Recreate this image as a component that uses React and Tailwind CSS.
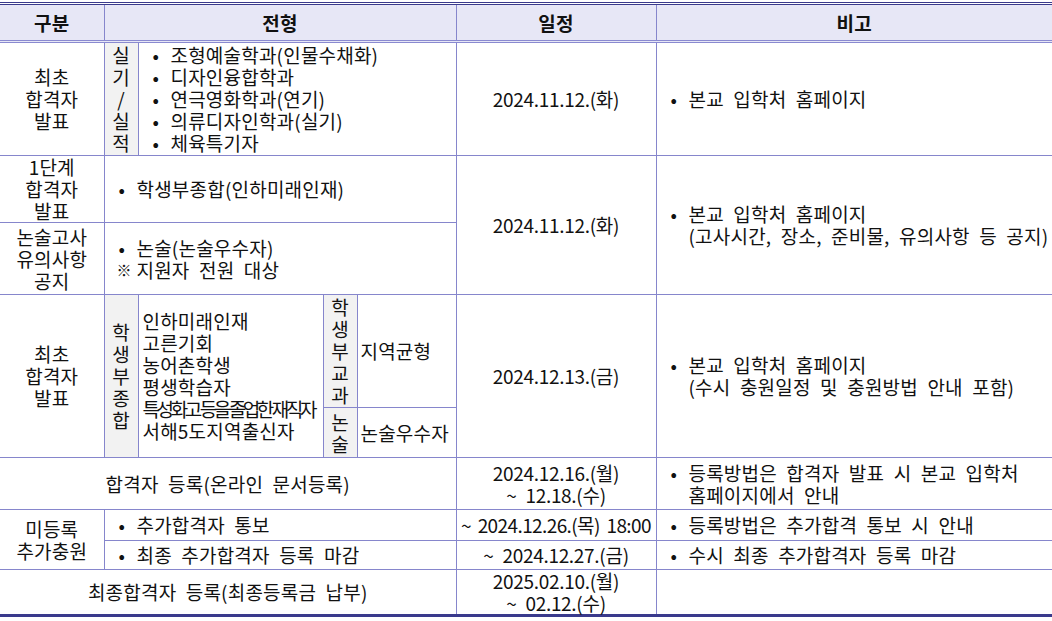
import React from "react";

const line = "border border-[#8686cc]";
const gray = "bg-[#f2f2f2]";
const dotted = "border-b-[#a8a8dc] [border-bottom-style:dotted]";

const Bul = ({ children }) => (
  <div className="flex">
    <span className="w-[18px] shrink-0">•</span>
    <span>{children}</span>
  </div>
);

const Vert = ({ text }) => (
  <div className="flex flex-col items-center">
    {text.split("").map((c, i) => (
      <span key={i}>{c}</span>
    ))}
  </div>
);

const App = () => {
  return (
    <div className="w-[1052px] h-[621px] bg-white pt-[2px] text-[19px] leading-[22px] text-[#111] font-['Noto_Sans_CJK_KR',sans-serif] tracking-[0.2px] [word-spacing:5px]">
      <table className="w-[1052px] table-fixed border-collapse">
        <colgroup>
          <col className="w-[104px]" />
          <col className="w-[34px]" />
          <col className="w-[185px]" />
          <col className="w-[34px]" />
          <col className="w-[99px]" />
          <col className="w-[200px]" />
          <col className="w-[396px]" />
        </colgroup>
        <thead>
          <tr className="h-[38px] bg-[#e7e7f6] font-bold">
            <th className={`${line} border-l-0 border-t-[3px] border-t-[#3a3a8c] border-b-[3px] border-b-[#8a8ad0] border-double`}>구분</th>
            <th colSpan={4} className={`${line} border-t-[3px] border-t-[#3a3a8c] border-b-[3px] border-b-[#8a8ad0] border-double`}>전형</th>
            <th className={`${line} border-t-[3px] border-t-[#3a3a8c] border-b-[3px] border-b-[#8a8ad0] border-double`}>일정</th>
            <th className={`${line} border-r-0 border-t-[3px] border-t-[#3a3a8c] border-b-[3px] border-b-[#8a8ad0] border-double`}>비고</th>
          </tr>
        </thead>
        <tbody>
          <tr className="h-[114px]">
            <td className={`${line} border-l-0 text-center`}>
              최초<br />합격자<br />발표
            </td>
            <td className={`${line} ${gray}`}>
              <Vert text="실기/실적" />
            </td>
            <td colSpan={3} className={`${line} pl-[14px]`}>
              <Bul>조형예술학과(인물수채화)</Bul>
              <Bul>디자인융합학과</Bul>
              <Bul>연극영화학과(연기)</Bul>
              <Bul>의류디자인학과(실기)</Bul>
              <Bul>체육특기자</Bul>
            </td>
            <td className={`${line} text-center tracking-[-0.3px]`}>2024.11.12.(화)</td>
            <td className={`${line} border-r-0 pl-[14px]`}>
              <Bul>본교 입학처 홈페이지</Bul>
            </td>
          </tr>
          <tr className="h-[65px]">
            <td className={`${line} border-l-0 text-center`}>
              1단계<br />합격자<br />발표
            </td>
            <td colSpan={4} className={`${line} pl-[14px]`}>
              <Bul>학생부종합(인하미래인재)</Bul>
            </td>
            <td rowSpan={2} className={`${line} text-center tracking-[-0.3px]`}>2024.11.12.(화)</td>
            <td rowSpan={2} className={`${line} border-r-0 pl-[14px]`}>
              <Bul>
                본교 입학처 홈페이지
                <br />
                <span className="whitespace-nowrap">(고사시간, 장소, 준비물, 유의사항 등 공지)</span>
              </Bul>
            </td>
          </tr>
          <tr className="h-[72px]">
            <td className={`${line} border-l-0 text-center`}>
              논술고사<br />유의사항<br />공지
            </td>
            <td colSpan={4} className={`${line} pl-[14px]`}>
              <Bul>논술(논술우수자)</Bul>
              <div className="flex items-center">
                <span className="w-[20px] -ml-[2px] shrink-0 text-[15px]">※</span>
                <span>지원자 전원 대상</span>
              </div>
            </td>
          </tr>
          <tr className="h-[113px]">
            <td rowSpan={2} className={`${line} border-l-0 text-center`}>
              최초<br />합격자<br />발표
            </td>
            <td rowSpan={2} className={`${line} ${gray}`}>
              <Vert text="학생부종합" />
            </td>
            <td rowSpan={2} className={`${line} pl-[4px]`}>
              <div>인하미래인재</div>
              <div>고른기회</div>
              <div>농어촌학생</div>
              <div>평생학습자</div>
              <div className="whitespace-nowrap tracking-[-3.4px] [word-spacing:0px]">특성화고 등을 졸업한 재직자</div>
              <div>서해5도지역출신자</div>
            </td>
            <td className={`${line} ${gray}`}>
              <Vert text="학생부교과" />
            </td>
            <td className={`${line} pl-[3px]`}>지역균형</td>
            <td rowSpan={2} className={`${line} text-center tracking-[-0.3px]`}>2024.12.13.(금)</td>
            <td rowSpan={2} className={`${line} border-r-0 pl-[14px]`}>
              <Bul>
                본교 입학처 홈페이지
                <br />
                (수시 충원일정 및 충원방법 안내 포함)
              </Bul>
            </td>
          </tr>
          <tr className="h-[50px]">
            <td className={`${line} ${gray}`}>
              <Vert text="논술" />
            </td>
            <td className={`${line} pl-[3px] whitespace-nowrap [word-spacing:0px]`}>논술우수자</td>
          </tr>
          <tr className="h-[52px]">
            <td colSpan={5} className={`${line} border-l-0 ${dotted} text-center`}>
              합격자 등록(온라인 문서등록)
            </td>
            <td className={`${line} ${dotted} text-center tracking-[-0.3px]`}>
              2024.12.16.(월)<br />~ 12.18.(수)
            </td>
            <td className={`${line} border-r-0 ${dotted} pl-[14px]`}>
              <Bul>
                등록방법은 합격자 발표 시 본교 입학처
                <br />
                홈페이지에서 안내
              </Bul>
            </td>
          </tr>
          <tr className="h-[31px]">
            <td rowSpan={2} className={`${line} border-l-0 text-center`}>
              미등록<br />추가충원
            </td>
            <td colSpan={4} className={`${line} pl-[14px]`}>
              <Bul>추가합격자 통보</Bul>
            </td>
            <td className={`${line} text-center whitespace-nowrap tracking-[-0.6px] [word-spacing:3px]`}>~ 2024.12.26.(목) 18:00</td>
            <td className={`${line} border-r-0 pl-[14px]`}>
              <Bul>등록방법은 추가합격 통보 시 안내</Bul>
            </td>
          </tr>
          <tr className="h-[29px]">
            <td colSpan={4} className={`${line} pl-[14px]`}>
              <Bul>최종 추가합격자 등록 마감</Bul>
            </td>
            <td className={`${line} text-center tracking-[-0.3px]`}>~ 2024.12.27.(금)</td>
            <td className={`${line} border-r-0 pl-[14px]`}>
              <Bul>수시 최종 추가합격자 등록 마감</Bul>
            </td>
          </tr>
          <tr className="h-[45px]">
            <td colSpan={5} className={`${line} border-l-0 border-b-[3px] border-b-[#3a3a8c] text-center`}>
              최종합격자 등록(최종등록금 납부)
            </td>
            <td className={`${line} border-b-[3px] border-b-[#3a3a8c] text-center tracking-[-0.3px]`}>
              2025.02.10.(월)<br />~ 02.12.(수)
            </td>
            <td className={`${line} border-r-0 border-b-[3px] border-b-[#3a3a8c]`}></td>
          </tr>
        </tbody>
      </table>
    </div>
  );
};

export default App;
